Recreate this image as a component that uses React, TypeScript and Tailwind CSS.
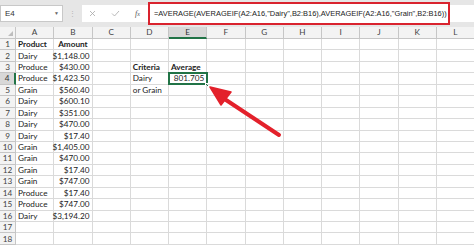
const COLS = ['A', 'B', 'C', 'D', 'E', 'F', 'G', 'H', 'I', 'J', 'K', 'L'];

type Cell = { v: string; bold?: boolean; align?: 'left' | 'right' | 'center' };

const SHEET: Record<number, Record<string, Cell>> = {
  1: { A: { v: 'Product', bold: true }, B: { v: 'Amount', bold: true, align: 'center' } },
  2: { A: { v: 'Dairy' }, B: { v: '$1,148.00', align: 'right' } },
  3: {
    A: { v: 'Produce' },
    B: { v: '$430.00', align: 'right' },
    D: { v: 'Criteria', bold: true },
    E: { v: 'Average', bold: true },
  },
  4: {
    A: { v: 'Produce' },
    B: { v: '$1,423.50', align: 'right' },
    D: { v: 'Dairy' },
    E: { v: '801.705', align: 'right' },
  },
  5: { A: { v: 'Grain' }, B: { v: '$560.40', align: 'right' }, D: { v: 'or Grain' } },
  6: { A: { v: 'Dairy' }, B: { v: '$600.10', align: 'right' } },
  7: { A: { v: 'Dairy' }, B: { v: '$351.00', align: 'right' } },
  8: { A: { v: 'Dairy' }, B: { v: '$470.00', align: 'right' } },
  9: { A: { v: 'Dairy' }, B: { v: '$17.40', align: 'right' } },
  10: { A: { v: 'Grain' }, B: { v: '$1,405.00', align: 'right' } },
  11: { A: { v: 'Grain' }, B: { v: '$470.00', align: 'right' } },
  12: { A: { v: 'Grain' }, B: { v: '$17.40', align: 'right' } },
  13: { A: { v: 'Grain' }, B: { v: '$747.00', align: 'right' } },
  14: { A: { v: 'Produce' }, B: { v: '$17.40', align: 'right' } },
  15: { A: { v: 'Produce' }, B: { v: '$747.00', align: 'right' } },
  16: { A: { v: 'Dairy' }, B: { v: '$3,194.20', align: 'right' } },
};

const FORMULA = '=AVERAGE(AVERAGEIF(A2:A16,"Dairy",B2:B16),AVERAGEIF(A2:A16,"Grain",B2:B16))';

function FormulaBar() {
  return (
    <div className="flex h-[27px] items-center bg-[#e6e6e6] font-['Liberation_Sans',sans-serif]">
      <div className="flex h-[17px] w-[63px] items-center justify-between border border-[#c8c8c8] bg-white pl-[4px] pr-[3px] text-[8px] text-[#333]">
        <span>E4</span>
        <span className="text-[5px] text-[#666]">▼</span>
      </div>
      <div className="flex w-[19px] justify-center text-[7px] leading-none text-[#b0b0b0]">⋮</div>
      <div className="flex h-[17px] flex-1 items-center bg-white">
        <div className="flex w-[66px] items-center gap-[15px] pl-[7px] text-[#9a9a9a]">
          <svg width="7" height="7" viewBox="0 0 7 7">
            <path d="M1 1L6 6M6 1L1 6" stroke="#a8a8a8" strokeWidth="0.8" />
          </svg>
          <svg width="9" height="7" viewBox="0 0 9 7">
            <path d="M1 3.5L3.5 6L8 1" stroke="#a8a8a8" strokeWidth="0.8" fill="none" />
          </svg>
          <span className="font-['Liberation_Serif',serif] text-[8px] italic text-[#555]">
            f<span className="text-[6px]">x</span>
          </span>
        </div>
        <div className="flex h-[23px] w-[302px] items-center border-2 border-[#d9232e] bg-white pl-[4px] text-[7.45px] whitespace-nowrap text-[#222]">
          {FORMULA}
        </div>
      </div>
    </div>
  );
}

function Sheet() {
  const rows = Array.from({ length: 18 }, (_, i) => i + 1);
  return (
    <div className="grid grid-cols-[16px_repeat(12,38.25px)] font-['Lato',sans-serif] text-[8.2px] text-[#222]">
      <div className="relative h-[12px] border-r border-b border-[#c6c6c6] bg-[#f3f3f3]">
        <div className="absolute right-[2px] bottom-[2px] h-0 w-0 border-t-[5px] border-l-[5px] border-b-[5px] border-t-transparent border-l-transparent border-b-[#bdbdbd]" />
      </div>
      {COLS.map((c) => (
        <div
          key={c}
          className={
            c === 'E'
              ? 'flex h-[12px] items-center justify-center border-r border-b-2 border-r-[#c6c6c6] border-b-[#217346] bg-[#d8d8d8] text-[#333]'
              : 'flex h-[12px] items-center justify-center border-r border-b border-[#c6c6c6] bg-[#f3f3f3] text-[#444]'
          }
        >
          {c}
        </div>
      ))}
      {rows.map((r) => (
        <Row key={r} r={r} />
      ))}
    </div>
  );
}

function Row({ r }: { r: number }) {
  const data = SHEET[r] ?? {};
  return (
    <>
      <div
        className={
          r === 4
            ? 'flex h-[11.44px] items-center justify-center border-r-2 border-b border-r-[#217346] border-b-[#c6c6c6] bg-[#d8d8d8] text-[#333]'
            : 'flex h-[11.44px] items-center justify-center border-r border-b border-[#c6c6c6] bg-[#f3f3f3] text-[#444]'
        }
      >
        {r}
      </div>
      {COLS.map((c) => {
        const cell = data[c];
        const selected = r === 4 && c === 'E';
        return (
          <div
            key={c}
            className={
              'relative flex h-[11.44px] items-center overflow-visible border-r border-b border-[#dadada] px-[2px] whitespace-nowrap ' +
              (cell?.align === 'right' ? 'justify-end' : cell?.align === 'center' ? 'justify-center' : 'justify-start')
            }
          >
            {cell && <span className={cell.bold ? 'font-bold' : ''}>{cell.v}</span>}
            {selected && (
              <>
                <div className="absolute -top-[1px] -left-[1px] h-[12.5px] w-[39.5px] border-2 border-[#217346]" />
                <div className="absolute -right-[3px] -bottom-[3px] h-[4px] w-[4px] border border-white bg-[#217346]" />
              </>
            )}
          </div>
        );
      })}
    </>
  );
}

export default function App() {
  return (
    <div className="relative h-[246px] w-[474px] overflow-hidden bg-white">
      <FormulaBar />
      <Sheet />
      <svg className="pointer-events-none absolute top-0 left-0" width="474" height="246" viewBox="0 0 474 246">
        <line x1="279" y1="135" x2="220" y2="96" stroke="#e3212b" strokeWidth="4" strokeLinecap="round" />
        <polygon points="210,87 231,92 221,105" fill="#e3212b" stroke="#e3212b" strokeWidth="1.5" strokeLinejoin="round" />
      </svg>
    </div>
  );
}
